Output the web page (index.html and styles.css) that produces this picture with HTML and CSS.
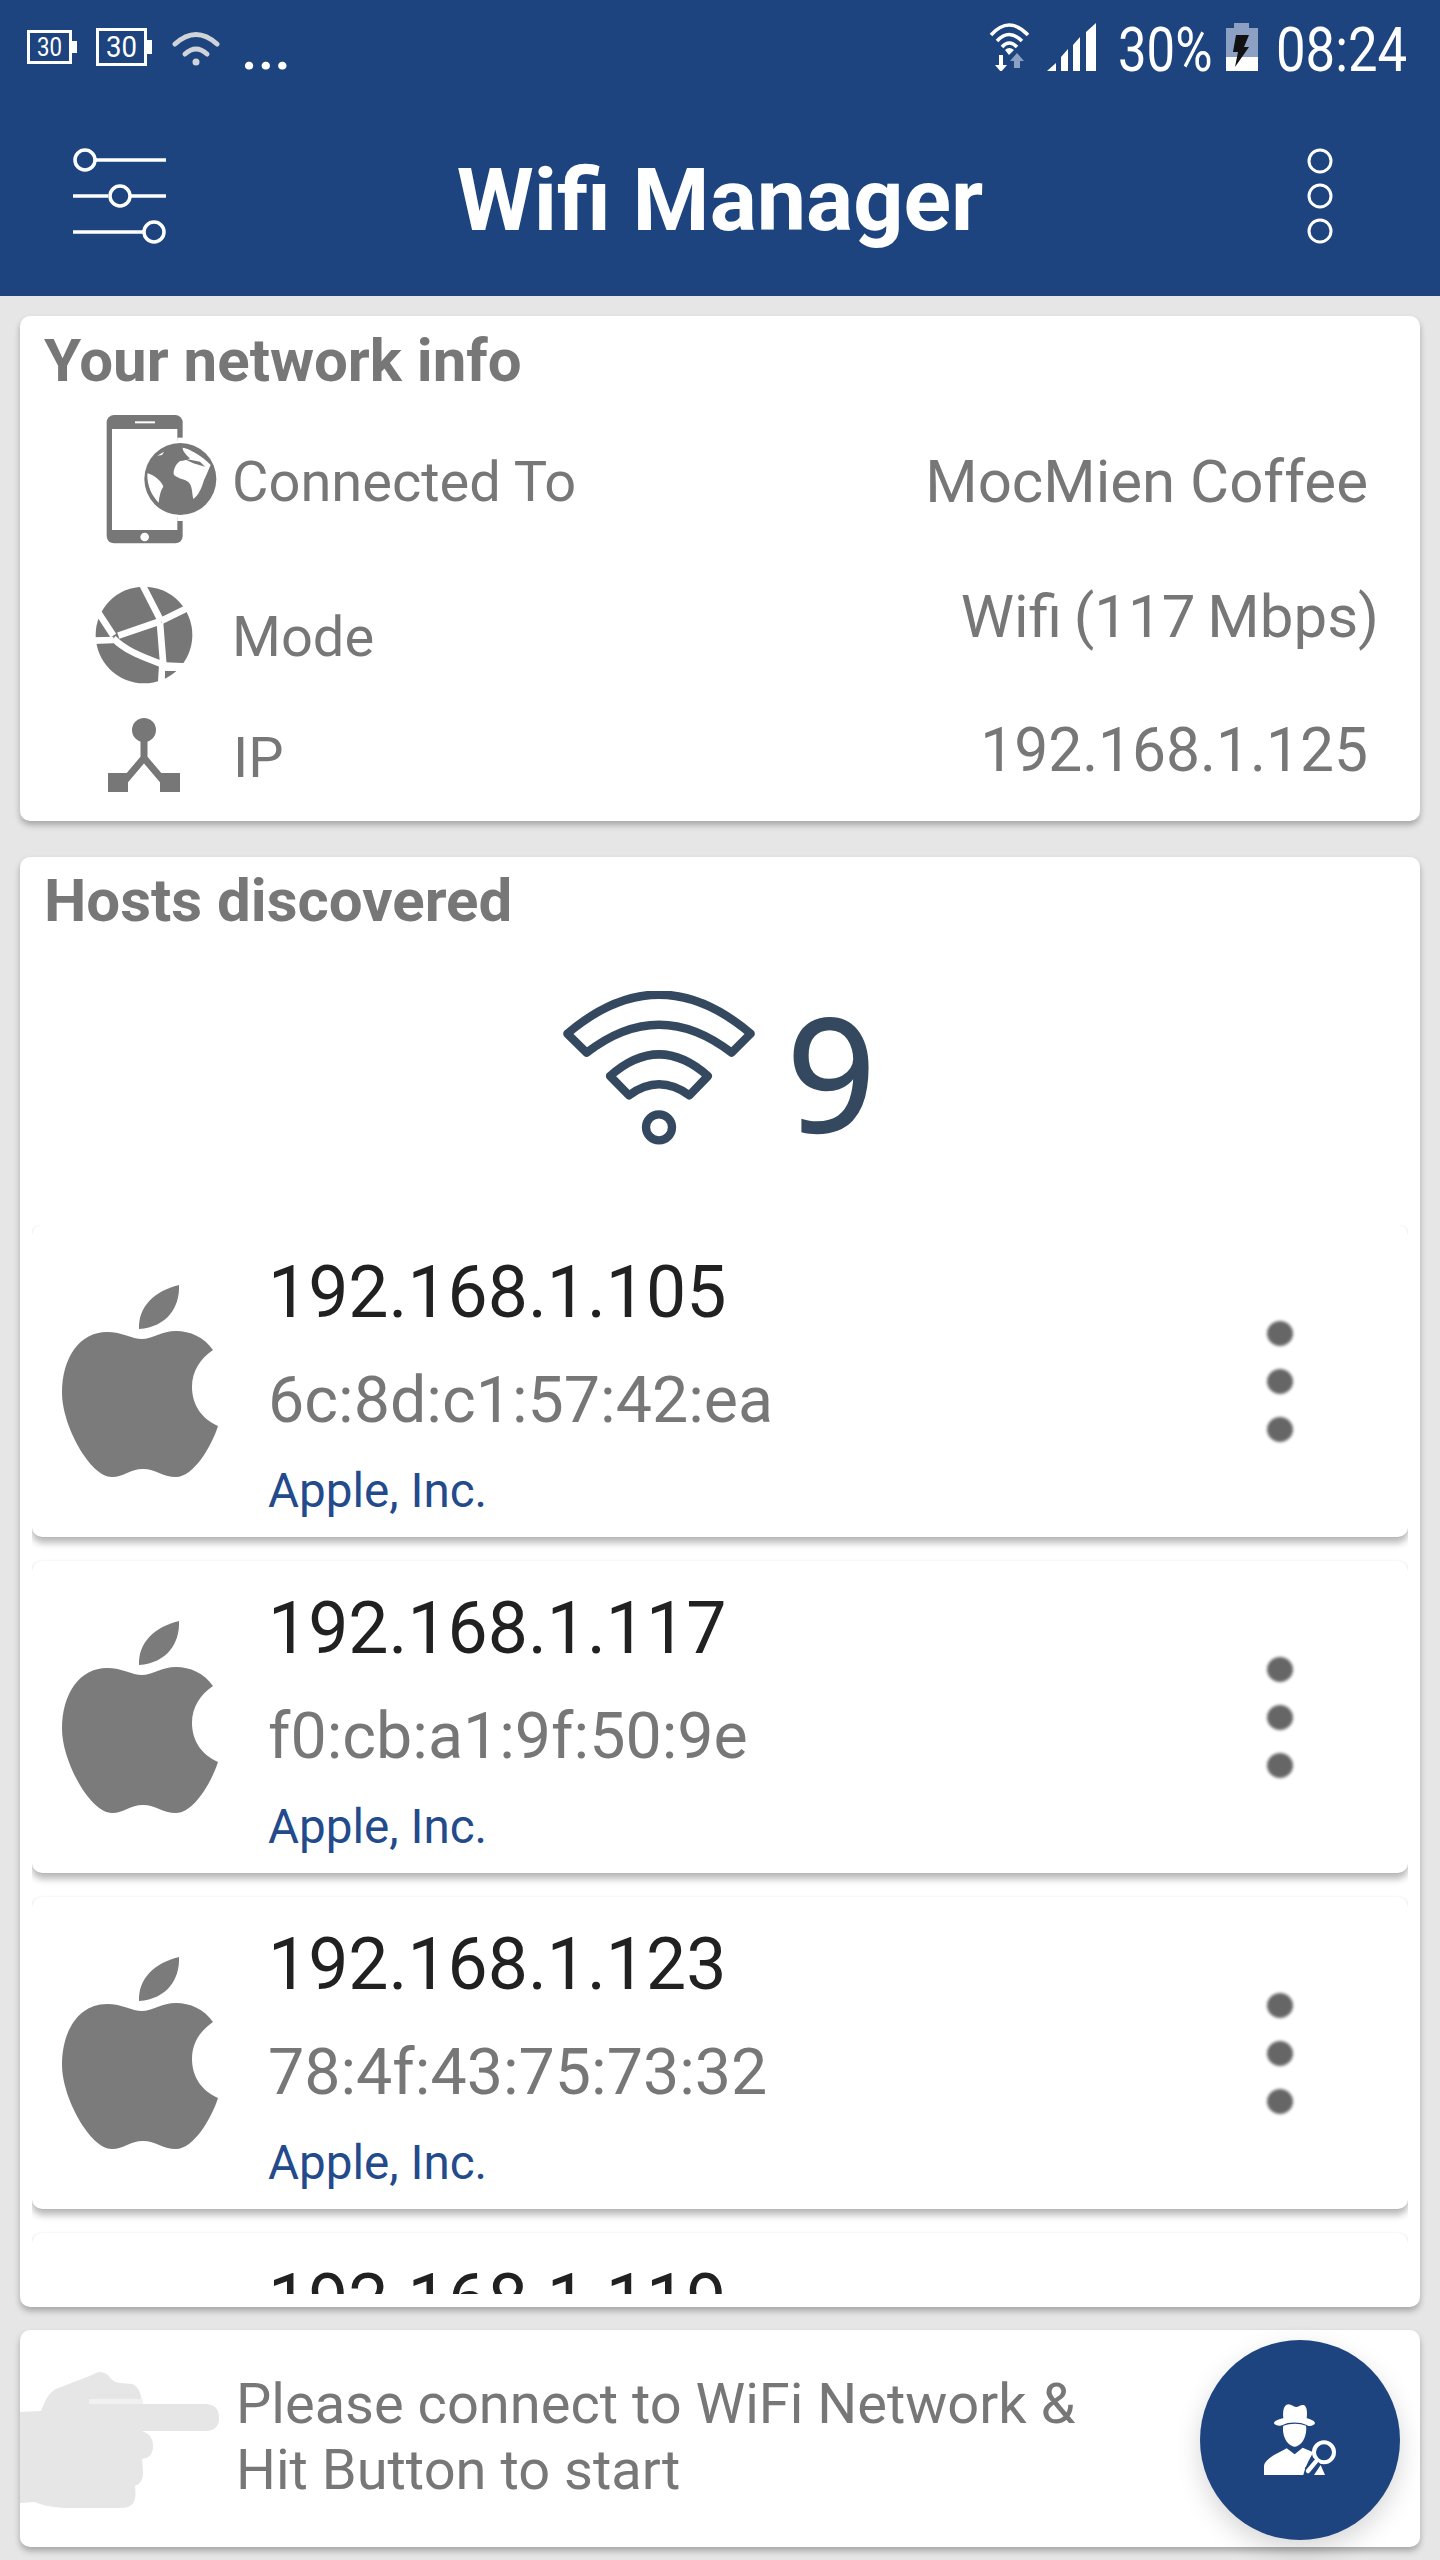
FILE: index.html
```html
<!DOCTYPE html>
<html lang="en">
<head>
    <meta charset="UTF-8">
    <meta name="viewport" content="width=device-width, initial-scale=1.0">
    <title>Wifi Manager</title>
    <link rel="stylesheet" href="styles.css">
</head>
<body>
    <svg class="defs" width="0" height="0">
        <symbol id="apple" viewBox="0 0 157 193">
            <path d="M117 0C118 22 105 42 77 44C76 22 92 6 117 0Z"/>
            <path d="M80 54C70 54 60 47 45 47C18 47 0 72 0 108C0 140 28 192 50 192C62 192 68 184 81 184C94 184 100 192 114 192C132 192 150 160 156 141C140 134 130 120 130 102C130 86 138 74 151 65C142 52 128 46 114 46C100 46 90 54 80 54Z"/>
        </symbol>
    </svg>

    <header class="header">
        <div class="status-bar">
            <svg class="battery-small" width="50" height="34" viewBox="0 0 50 34">
                <rect x="1.5" y="1.5" width="42" height="31" fill="none" stroke="#fff" stroke-width="3"/>
                <rect x="45" y="11" width="5" height="12" fill="#fff"/>
                <text x="10" y="26" class="battery-text" font-size="25" textLength="25" lengthAdjust="spacingAndGlyphs">30</text>
            </svg>
            <svg class="battery-large" width="56" height="38" viewBox="0 0 56 38">
                <rect x="1.5" y="1.5" width="48" height="35" fill="none" stroke="#fff" stroke-width="3"/>
                <rect x="50" y="12" width="6" height="14" fill="#fff"/>
                <text x="10" y="29" class="battery-text" font-size="29" textLength="31" lengthAdjust="spacingAndGlyphs">30</text>
            </svg>
            <svg class="wifi-muted" width="48" height="36" viewBox="0 0 48 36">
                <path d="M3 14Q24 -5 45 14" fill="none" stroke="#d0d3d8" stroke-width="5" stroke-linecap="round"/>
                <path d="M13 24Q24 14 35 24" fill="none" stroke="#d0d3d8" stroke-width="5" stroke-linecap="round"/>
                <circle cx="24" cy="32" r="3.5" fill="#d0d3d8"/>
            </svg>
            <span class="status-more">...</span>

            <div class="status-right">
                <svg class="wifi-data" width="41" height="49" viewBox="0 0 41 49">
                    <path d="M2 13Q20 -7 39 13" fill="none" stroke="#fff" stroke-width="3.5"/>
                    <path d="M8 19Q20 6 33 19" fill="none" stroke="#fff" stroke-width="3.5"/>
                    <path d="M13 25Q20 17 28 25" fill="none" stroke="#fff" stroke-width="3.5"/>
                    <path d="M16 28Q20 24 25 28L20 33Z" fill="#fff"/>
                    <path d="M10 33H14V43H18L12 50L6 43H10Z" fill="#fff"/>
                    <path d="M25 46V39H21L28 31L35 39H31V46Z" fill="#8ba0c2"/>
                </svg>
                <svg class="signal" width="49" height="48" viewBox="0 0 49 48">
                    <polygon points="0,48 9,40 9,48" fill="#fff"/>
                    <polygon points="14,34 21,26 21,48 14,48" fill="#fff"/>
                    <polygon points="26,22 33,14 33,48 26,48" fill="#fff"/>
                    <polygon points="39,9 49,0 49,48 39,48" fill="#fff"/>
                </svg>
                <span class="status-text status-percent">30%</span>
                <svg class="battery-charge" width="32" height="48" viewBox="0 0 32 48">
                    <rect x="8" y="0" width="15" height="5" fill="#8ba0c2"/>
                    <rect x="0" y="5" width="32" height="29" fill="#8ba0c2"/>
                    <rect x="0" y="34" width="32" height="14" fill="#fff"/>
                    <polygon points="10,12 23,12 18,24 23,24 9,44 12,29 7,29" fill="#111"/>
                </svg>
                <span class="status-text status-time">08:24</span>
            </div>
        </div>

        <div class="app-bar">
            <svg class="filter-icon" width="93" height="96" viewBox="0 0 93 96">
                <g fill="none" stroke="#fff" stroke-width="3.5">
                    <circle cx="12" cy="12" r="10"/>
                    <path d="M22 12H93"/>
                    <path d="M0 48H35"/>
                    <circle cx="47" cy="48" r="10"/>
                    <path d="M57 48H93"/>
                    <path d="M0 84H70"/>
                    <circle cx="81" cy="84" r="10"/>
                </g>
            </svg>
            <h1 class="app-title">Wifi Manager</h1>
            <svg class="more-icon" width="26" height="96" viewBox="0 0 26 96">
                <g fill="none" stroke="#fff" stroke-width="3">
                    <circle cx="13" cy="13" r="11"/>
                    <circle cx="13" cy="48" r="11"/>
                    <circle cx="13" cy="83" r="11"/>
                </g>
            </svg>
        </div>
    </header>

    <main class="content">
        <section class="card card-network">
            <h2 class="card-title">Your network info</h2>

            <div class="info-row info-connected">
                <svg class="icon-phone" width="140" height="145" viewBox="0 0 420 435">
                    <rect x="50" y="30" width="228" height="385" rx="22" fill="#777"/>
                    <rect x="66" y="72" width="196" height="303" fill="#fff"/>
                    <rect x="135" y="49" width="60" height="6" fill="#fff"/>
                    <circle cx="164" cy="396" r="13" fill="#fff"/>
                    <rect x="262" y="98" width="20" height="250" fill="#fff"/>
                    <circle cx="271" cy="222" r="115" fill="#fff"/>
                    <circle cx="271" cy="222" r="108" fill="#777"/>
                    <path d="M172 205C190 208 215 228 220 245C212 255 208 275 206 293C188 275 170 245 172 205Z" fill="#fff"/>
                    <path d="M278 128C295 130 335 150 362 180C355 195 352 205 342 225C335 250 325 272 310 282C305 262 308 245 296 232C285 222 265 222 252 210C248 198 256 178 270 168C280 168 290 165 300 160C290 150 278 140 278 128Z" fill="#fff"/>
                    <path d="M202 152L222 140L216 150Z" fill="#fff"/>
                    <path d="M278 160L330 170L345 185L310 175Z" fill="#777"/>
                </svg>
                <span class="info-label">Connected To</span>
                <span class="info-value">MocMien Coffee</span>
            </div>

            <div class="info-row info-mode">
                <svg class="icon-globe" width="120" height="120" viewBox="0 0 360 360">
                    <circle cx="177" cy="180" r="145" fill="#777"/>
                    <g fill="none" stroke="#fff" stroke-width="20">
                        <path d="M170 25L228 138"/>
                        <path d="M228 138L315 95"/>
                        <path d="M228 138L100 182"/>
                        <path d="M35 105L85 182"/>
                        <path d="M25 197L85 195"/>
                        <path d="M85 190C130 235 190 250 240 272"/>
                        <path d="M225 145L235 270"/>
                        <path d="M240 272L310 275"/>
                        <path d="M232 270L228 335"/>
                    </g>
                    <path d="M226 335L340 270L340 360H226Z" fill="#fff"/>
                    <path d="M240 283L272 288L240 310Z" fill="#777"/>
                    <path d="M240 270H302L292 288H240Z" fill="#fff"/>
                </svg>
                <span class="info-label">Mode</span>
                <span class="info-value info-value-mode">Wifi (117 Mbps)</span>
            </div>

            <div class="info-row info-ip">
                <svg class="icon-ip" width="72" height="74" viewBox="0 0 72 74">
                    <circle cx="36" cy="12" r="12" fill="#777"/>
                    <path d="M36 20V40L14 66M36 40L58 66" fill="none" stroke="#777" stroke-width="7"/>
                    <rect x="0" y="55" width="20" height="19" fill="#777"/>
                    <rect x="52" y="55" width="20" height="19" fill="#777"/>
                </svg>
                <span class="info-label">IP</span>
                <span class="info-value info-value-ip">192.168.1.125</span>
            </div>
        </section>

        <section class="card card-hosts">
            <h2 class="card-title">Hosts discovered</h2>

            <div class="host-count">
                <svg class="icon-wifi" width="192" height="154" viewBox="249 130 576 462">
                    <g fill="none" stroke="#34495f" stroke-width="25" stroke-linejoin="round">
                        <path d="M262 258Q537 24 812 258L755 315Q537 147 320 315Z"/>
                        <path d="M390 385Q537 255 684 385L628 443Q537 377 447 443Z"/>
                        <circle cx="537" cy="539" r="39"/>
                    </g>
                </svg>
                <span class="host-number">9</span>
            </div>

            <div class="host-list">
                <div class="host-item">
                    <svg class="apple-logo" width="157" height="193"><use href="#apple"/></svg>
                    <div class="host-info">
                        <div class="host-ip">192.168.1.105</div>
                        <div class="host-mac">6c:8d:c1:57:42:ea</div>
                        <div class="host-vendor">Apple, Inc.</div>
                    </div>
                    <div class="host-menu"><i></i><i></i><i></i></div>
                </div>
                <div class="host-item">
                    <svg class="apple-logo" width="157" height="193"><use href="#apple"/></svg>
                    <div class="host-info">
                        <div class="host-ip">192.168.1.117</div>
                        <div class="host-mac">f0:cb:a1:9f:50:9e</div>
                        <div class="host-vendor">Apple, Inc.</div>
                    </div>
                    <div class="host-menu"><i></i><i></i><i></i></div>
                </div>
                <div class="host-item">
                    <svg class="apple-logo" width="157" height="193"><use href="#apple"/></svg>
                    <div class="host-info">
                        <div class="host-ip">192.168.1.123</div>
                        <div class="host-mac">78:4f:43:75:73:32</div>
                        <div class="host-vendor">Apple, Inc.</div>
                    </div>
                    <div class="host-menu"><i></i><i></i><i></i></div>
                </div>
                <div class="host-item">
                    <div class="logo-blank"></div>
                    <div class="host-info">
                        <div class="host-ip">192.168.1.119</div>
                    </div>
                </div>
            </div>
        </section>

        <section class="card card-start">
            <svg class="icon-hand" width="200" height="150" viewBox="0 0 200 150">
                <path d="M0 52L21 51C26 38 30 32 36 29L72 15Q80 9 88 15Q92 22 100 23L112 24Q121 27 122 44L185 44Q199 44 199 58Q199 71 185 71L122 71Q133 74 133 86Q133 98 122 99Q123 109 123 113Q123 123 115 126Q116 136 115 138Q114 148 100 148L45 148Q25 147 15 142L0 143Z" fill="#e6e6e6"/>
                <rect x="69" y="39" width="54" height="5" fill="#f1f1f1"/>
            </svg>
            <p class="start-text">Please connect to WiFi Network &amp;<br>Hit Button to start</p>
            <button class="fab" type="button">
                <svg width="100" height="90" viewBox="0 0 300 270">
                    <path d="M100 70C98 50 100 30 115 28C125 28 130 36 138 36C146 36 152 28 162 30C172 36 172 55 170 70C180 72 195 78 195 85C190 95 175 95 170 90C150 80 115 80 98 90C90 95 75 92 72 85C72 78 88 72 100 70Z" fill="#fff"/>
                    <path d="M100 92C120 84 150 84 168 92C172 115 160 152 134 155C108 152 95 115 100 92Z" fill="#fff"/>
                    <path d="M42 240V215C42 190 85 175 110 160L134 178L158 158L190 172C180 190 170 205 160 240Z" fill="#fff"/>
                    <path d="M192 240L212 210L225 240Z" fill="#fff"/>
                    <circle cx="222" cy="172" r="30" fill="#1d447f" stroke="#fff" stroke-width="12"/>
                    <path d="M200 197L174 228" fill="none" stroke="#1d447f" stroke-width="26"/>
                    <path d="M200 197L174 228" fill="none" stroke="#fff" stroke-width="13" stroke-linecap="round"/>
                </svg>
            </button>
        </section>
    </main>
</body>
</html>
```

FILE: styles.css
```css
* {
    box-sizing: border-box;
}
html, body {
    margin: 0;
    height: 2560px;
    overflow: hidden;
}
body {
    font-family: Roboto, "Liberation Sans", sans-serif;
    background-color: #e6e6e6;
    color: #777;
}
.defs {
    position: absolute;
}
.header {
    background-color: #1d447f;
    height: 296px;
}

/* status bar */
.status-bar {
    display: flex;
    align-items: flex-start;
    height: 90px;
    padding: 0 33px 0 27px;
    color: #fff;
}
.battery-small {
    margin-top: 30px;
}
.battery-large {
    margin: 28px 0 0 19px;
}
.wifi-muted {
    margin: 30px 0 0 20px;
}
.status-more {
    margin: 14px 0 0 21px;
    font-size: 60px;
    line-height: 70px;
    font-weight: 500;
}
.battery-text {
    fill: #fff;
    font-family: Roboto, sans-serif;
}
.status-right {
    display: flex;
    align-items: flex-start;
    margin-left: auto;
}
.wifi-data {
    margin-top: 22px;
}
.signal {
    margin: 23px 0 0 17px;
}
.battery-charge {
    margin: 23px 0 0 14px;
}
.status-text {
    font-size: 62px;
    line-height: 70px;
    margin-top: 15px;
    white-space: nowrap;
    transform-origin: left top;
}
.status-percent {
    width: 94px;
    margin-left: 22px;
    transform: scaleX(0.82);
}
.status-time {
    width: 131px;
    margin-left: 18px;
    transform: scaleX(0.85);
}

/* app bar */
.app-bar {
    display: grid;
    grid-template-columns: 1fr auto 1fr;
    align-items: center;
    height: 206px;
    padding: 0 107px 0 73px;
}
.filter-icon {
    margin-top: 6px;
}
.more-icon {
    justify-self: end;
    margin-top: 6px;
}
.app-title {
    margin: 0;
    font-size: 88px;
    line-height: 100px;
    font-weight: 700;
    color: #fff;
    transform: translate(17px, 7px);
}

/* cards */
.content {
    padding: 20px 20px 0;
}
.card {
    position: relative;
    background-color: #fff;
    border-radius: 10px;
    box-shadow: 0 4px 6px rgba(0, 0, 0, 0.28);
}
.card-title {
    margin: 0;
    padding: 15px 0 0 24px;
    font-size: 60px;
    line-height: 60px;
    font-weight: 700;
    color: #777;
}
.card-network {
    height: 505px;
}
.card-hosts {
    height: 1450px;
    margin-top: 36px;
    display: flex;
    flex-direction: column;
}
.card-hosts .card-title {
    padding-top: 14px;
}
.card-start {
    height: 217px;
    margin-top: 23px;
    display: flex;
    align-items: flex-start;
}

/* network info */
.info-row {
    display: flex;
    align-items: flex-start;
    font-size: 56px;
}
.info-connected {
    height: 155px;
    margin-top: 14px;
}
.info-mode {
    height: 130px;
    margin-top: 20px;
}
.info-ip {
    height: 90px;
}
.info-label {
    line-height: 60px;
    white-space: nowrap;
}
.info-value {
    margin-left: auto;
    line-height: 60px;
    font-size: 60px;
    white-space: nowrap;
}
.info-value-mode {
    word-spacing: -3px;
}
.info-value-ip {
    font-size: 60.5px;
}
.icon-phone {
    margin: 0 0 0 70px;
    flex-shrink: 0;
}
.info-connected .info-label {
    margin: 47px 0 0 2px;
}
.info-connected .info-value {
    margin-top: 47px;
    margin-right: 52px;
}
.icon-globe {
    margin: -5px 0 0 65px;
    flex-shrink: 0;
}
.info-mode .info-label {
    margin: 27px 0 0 27px;
}
.info-mode .info-value {
    margin-top: 7px;
    margin-right: 41px;
}
.icon-ip {
    margin: 8px 0 0 88px;
    flex-shrink: 0;
}
.info-ip .info-label {
    margin: 18px 0 0 53px;
}
.info-ip .info-value {
    margin-top: 11px;
    margin-right: 52px;
}

/* hosts */
.host-count {
    display: flex;
    align-items: flex-start;
    height: 294px;
    padding: 60px 0 0 543px;
    flex-shrink: 0;
}
.host-number {
    margin: 3px 0 0 32px;
    font-family: "Open Sans", sans-serif;
    font-size: 155px;
    line-height: 154px;
    font-weight: 400;
    -webkit-text-stroke: 2.5px #34495f;
    color: #34495f;
}
.host-list {
    flex: 1;
    margin: 0 12px 13px;
    overflow: hidden;
}
.host-item {
    display: flex;
    align-items: flex-start;
    height: 312px;
    margin-bottom: 24px;
    background-color: #fff;
    border-radius: 10px;
    box-shadow: 0 6px 7px rgba(0, 0, 0, 0.28), 0 0 2px rgba(0, 0, 0, 0.1);
}
.apple-logo {
    margin: 60px 0 0 30px;
    fill: #7b7b7b;
    flex-shrink: 0;
}
.logo-blank {
    width: 157px;
    margin-left: 30px;
    flex-shrink: 0;
}
.host-info {
    margin: 28px 0 0 49px;
}
.host-ip {
    font-size: 71.5px;
    line-height: 80px;
    color: #212121;
}
.host-mac {
    margin-top: 27px;
    font-size: 64.5px;
    line-height: 80px;
    color: #777;
}
.host-vendor {
    margin-top: 21px;
    font-size: 47.6px;
    line-height: 60px;
    color: #234b8c;
}
.host-menu {
    display: flex;
    flex-direction: column;
    gap: 23px;
    margin: 96px 115px 0 auto;
}
.host-menu i {
    display: block;
    width: 26px;
    height: 25px;
    border-radius: 50%;
    background-color: #666;
    filter: blur(1.5px);
}

/* start hint */
.icon-hand {
    margin-top: 30px;
    flex-shrink: 0;
}
.start-text {
    margin: 41px 0 0 16px;
    font-size: 56px;
    line-height: 66px;
    white-space: nowrap;
}
.fab {
    position: absolute;
    top: 10px;
    right: 20px;
    display: flex;
    align-items: center;
    justify-content: center;
    width: 200px;
    height: 200px;
    padding: 0;
    border: none;
    border-radius: 50%;
    background-color: #1d447f;
    box-shadow: 0 10px 26px rgba(0, 0, 0, 0.16);
}
```
